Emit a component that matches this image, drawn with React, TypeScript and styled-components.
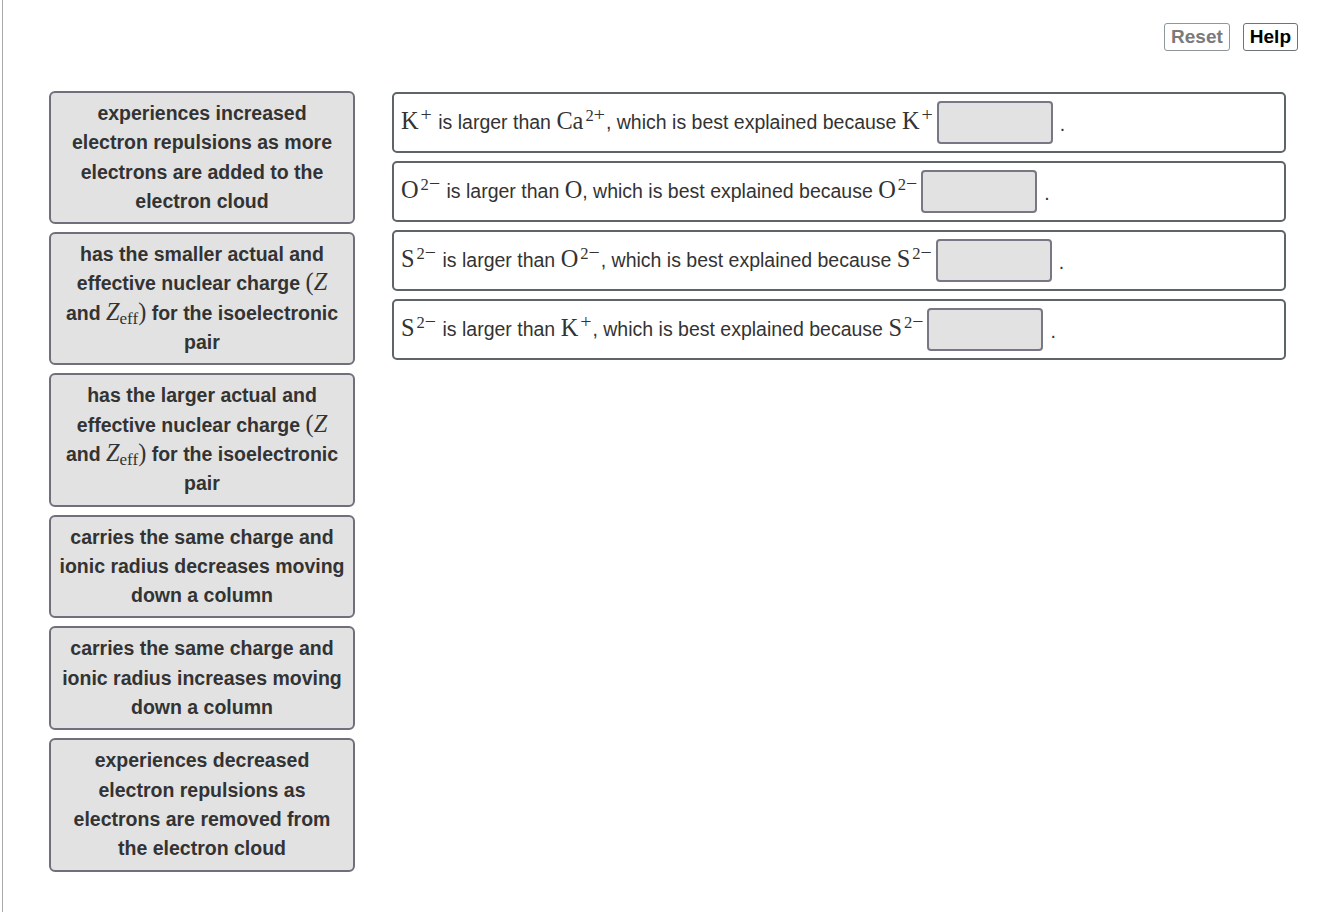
import React from 'react';
import styled, { createGlobalStyle } from 'styled-components';

const GlobalStyle = createGlobalStyle`
  html, body {
    margin: 0;
    padding: 0;
    background: #ffffff;
  }
  body {
    font-family: "Liberation Sans", Arial, sans-serif;
    color: #333333;
  }
`;

const Page = styled.div`
  margin-left: 2px;
  border-left: 1px solid #a9a9a9;
  min-height: 100vh;
  box-sizing: border-box;
`;

const Toolbar = styled.div`
  display: flex;
  justify-content: flex-end;
  gap: 13px;
  padding: 23px 35px 0 0;
`;

type buttonProps = {
  fontColor?: string;
  borderColor?: string;
};

const ToolButton = styled.button<buttonProps>`
  font-family: "Liberation Sans", Arial, sans-serif;
  font-weight: 700;
  font-size: 19px;
  line-height: 26px;
  height: 28px;
  padding: 0 6px;
  margin: 0;
  background: #ffffff;
  color: ${(props) => props.fontColor || '#000000'};
  border: 1px solid ${(props) => props.borderColor || '#666666'};
  border-radius: 3px;
  cursor: pointer;
`;

const Workspace = styled.div`
  display: flex;
  align-items: flex-start;
  gap: 37px;
  padding-left: 46px;
  margin-top: 40px;
`;

const Bank = styled.div`
  display: flex;
  flex-direction: column;
  gap: 8px;
  width: 306px;
  flex-shrink: 0;
`;

const Card = styled.div`
  box-sizing: border-box;
  width: 306px;
  padding: 6px 8px;
  background: #e2e2e2;
  border: 2px solid #70707c;
  border-radius: 6px;
  text-align: center;
  font-weight: 700;
  font-size: 19.5px;
  line-height: 29.3px;
  color: #333333;
`;

const Targets = styled.div`
  display: flex;
  flex-direction: column;
  gap: 8px;
  width: 894px;
  padding-top: 1px;
`;

const Row = styled.div`
  box-sizing: border-box;
  display: flex;
  align-items: center;
  padding: 7px 7px;
  border: 2px solid #5d6569;
  border-radius: 5px;
  background: #ffffff;
  font-size: 19.5px;
  color: #333333;
`;

const Sentence = styled.span`
  white-space: nowrap;
`;

const DropZone = styled.span<{ width: number }>`
  display: inline-block;
  box-sizing: border-box;
  width: ${(props) => props.width}px;
  height: 43px;
  margin-left: 3px;
  background: #e2e2e2;
  border: 2px solid #787884;
  border-radius: 4px;
`;

const Period = styled.span`
  margin-left: 7px;
  padding-top: 3px;
`;

const Math = styled.span<{ italic?: boolean }>`
  font-family: "Liberation Serif", "Times New Roman", serif;
  font-weight: 400;
  font-size: 1.25em;
  font-style: ${(props) => (props.italic ? 'italic' : 'normal')};
  line-height: 0;
`;

const Sup = styled.span`
  font-size: 0.68em;
  vertical-align: 0.5em;
  line-height: 0;
  margin-left: 2px;
  margin-right: 1px;
`;

const Sign = styled.span`
  font-size: 1.2em;
  line-height: 0;
`;

const Sub = styled.span`
  font-size: 0.7em;
  font-style: normal;
  vertical-align: -0.25em;
  line-height: 0;
`;

type IonData = { sym: string; charge?: string; sign?: string };

const Ion = ({ sym, charge, sign }: IonData) => (
  <Math>
    {sym}
    {sign && (
      <Sup>
        {charge}
        <Sign>{sign}</Sign>
      </Sup>
    )}
  </Math>
);

const Zeff = () => (
  <Math italic>
    Z<Sub>eff</Sub>
  </Math>
);

const NoWrap = styled.span`
  white-space: nowrap;
`;

const chargeText = (
  <>
    effective nuclear charge <Math>(</Math>
    <Math italic>Z</Math>{' '}
    <NoWrap>
      and <Zeff />
      <Math>)</Math>
    </NoWrap>{' '}
    for the isoelectronic pair
  </>
);

const cards: React.ReactNode[] = [
  'experiences increased electron repulsions as more electrons are added to the electron cloud',
  <>has the smaller actual and {chargeText}</>,
  <>has the larger actual and {chargeText}</>,
  'carries the same charge and ionic radius decreases moving down a column',
  'carries the same charge and ionic radius increases moving down a column',
  'experiences decreased electron repulsions as electrons are removed from the electron cloud',
];

const PLUS = '+';
const MINUS = '\u2212';

const rows: { a: IonData; b: IonData }[] = [
  { a: { sym: 'K', sign: PLUS }, b: { sym: 'Ca', charge: '2', sign: PLUS } },
  { a: { sym: 'O', charge: '2', sign: MINUS }, b: { sym: 'O' } },
  { a: { sym: 'S', charge: '2', sign: MINUS }, b: { sym: 'O', charge: '2', sign: MINUS } },
  { a: { sym: 'S', charge: '2', sign: MINUS }, b: { sym: 'K', sign: PLUS } },
];

export default function App() {
  return (
    <>
      <GlobalStyle />
      <Page>
        <Toolbar>
          <ToolButton fontColor="#7a7a7a" borderColor="#8d979c">
            Reset
          </ToolButton>
          <ToolButton fontColor="#000000" borderColor="#6b7478">
            Help
          </ToolButton>
        </Toolbar>
        <Workspace>
          <Bank>
            {cards.map((c, i) => (
              <Card key={i}>{c}</Card>
            ))}
          </Bank>
          <Targets>
            {rows.map((r, i) => (
              <Row key={i}>
                <Sentence>
                  <Ion {...r.a} /> is larger than <Ion {...r.b} />, which is best explained because{' '}
                  <Ion {...r.a} />
                </Sentence>
                <DropZone width={116} />
                <Period>.</Period>
              </Row>
            ))}
          </Targets>
        </Workspace>
      </Page>
    </>
  );
}
